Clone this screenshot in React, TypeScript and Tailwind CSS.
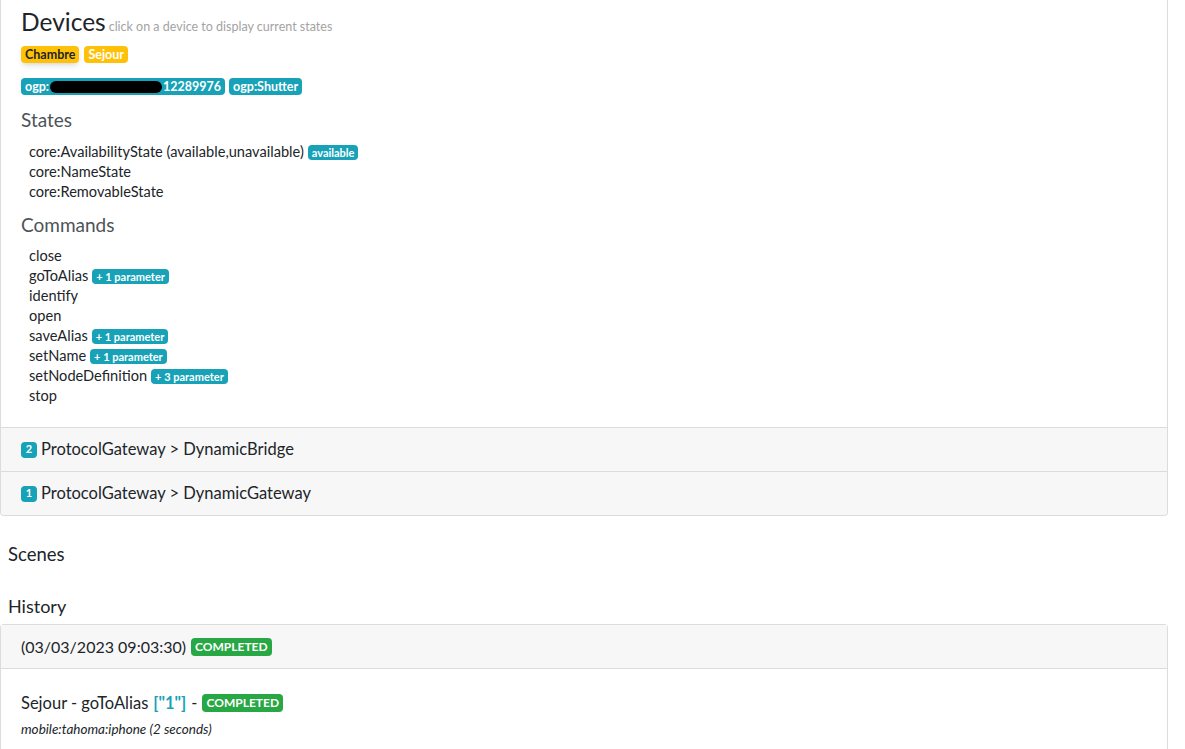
import React from "react";

const font = { fontFamily: "Lato, 'Noto Sans', sans-serif" };

function Badge({ children, className = "" }: { children: React.ReactNode; className?: string }) {
  return (
    <span className={`inline-block rounded px-1 text-[11px] font-bold leading-[15px] text-white ${className}`}>
      {children}
    </span>
  );
}

const states = [
  { name: "core:AvailabilityState (available,unavailable)", value: "available" },
  { name: "core:NameState" },
  { name: "core:RemovableState" },
];

const commands = [
  { name: "close" },
  { name: "goToAlias", params: 1 },
  { name: "identify" },
  { name: "open" },
  { name: "saveAlias", params: 1 },
  { name: "setName", params: 1 },
  { name: "setNodeDefinition", params: 3 },
  { name: "stop" },
];

export default function App() {
  return (
    <div className="min-h-screen bg-white text-[#212529]" style={font}>
      <div className="w-[1168px]">
        <div className="rounded-b border-x border-b border-[#dcdcdc]">
          <div className="px-5 pb-[21px] pt-[6px]">
            <div className="flex items-baseline gap-[3px]">
              <h1 className="text-[24.5px] leading-[32px]">Devices</h1>
              <span className="text-[12.5px] text-[#a3a3a3]">click on a device to display current states</span>
            </div>
            <div className="mt-[8px] flex gap-[5px]">
              <span className="rounded bg-[#ffc107] px-1 text-[12.5px] font-bold leading-[17px] text-[#212529] shadow-md">Chambre</span>
              <span className="rounded bg-[#ffc107] px-1 text-[12.5px] font-bold leading-[17px] text-white">Sejour</span>
            </div>
            <div className="mt-[15px] flex gap-[4px]">
              <span className="inline-flex items-center rounded bg-[#17a2b8] px-1 text-[12.5px] font-bold leading-[17px] text-white">
                ogp:
                <span className="mx-[1px] inline-block h-[12px] w-[112px] rounded-full bg-black" />
                12289976
              </span>
              <span className="rounded bg-[#17a2b8] px-1 text-[12.5px] font-bold leading-[17px] text-white">ogp:Shutter</span>
            </div>

            <h2 className="mt-[13px] text-[19px] leading-[24px] text-[#4d5358]">States</h2>
            <ul className="mt-[10px] pl-2 text-[14.6px] leading-[20px]">
              {states.map((s) => (
                <li key={s.name} className="flex items-center gap-1">
                  <span>{s.name}</span>
                  {s.value && <Badge className="bg-[#17a2b8]">{s.value}</Badge>}
                </li>
              ))}
            </ul>

            <h2 className="mt-[11px] text-[19px] leading-[24px] text-[#4d5358]">Commands</h2>
            <ul className="mt-[9px] pl-2 text-[14.6px] leading-[20px]">
              {commands.map((c) => (
                <li key={c.name} className="flex items-center gap-1">
                  <span>{c.name}</span>
                  {c.params && <Badge className="bg-[#17a2b8]">+ {c.params} parameter</Badge>}
                </li>
              ))}
            </ul>
          </div>
          {[
            { n: 2, label: "ProtocolGateway > DynamicBridge" },
            { n: 1, label: "ProtocolGateway > DynamicGateway" },
          ].map((g, i) => (
            <div
              key={g.label}
              className={`flex h-[44px] items-center gap-[4px] border-t border-[#dcdcdc] bg-[#f7f7f7] px-5 text-[16.5px] ${i === 1 ? "rounded-b" : ""}`}
            >
              <span className="inline-flex h-[16px] w-[16px] items-center justify-center rounded bg-[#17a2b8] text-[11px] font-bold text-white">
                {g.n}
              </span>
              <span>{g.label}</span>
            </div>
          ))}
        </div>

        <h3 className="mt-[26px] px-2 text-[18.5px] leading-[24px]">Scenes</h3>
        <h3 className="mt-[28px] px-2 text-[18px] leading-[24px]">History</h3>

        <div className="mt-[6px] rounded-t border-x border-t border-[#dcdcdc]">
          <div className="flex h-[44px] items-center gap-[5px] border-b border-[#dcdcdc] bg-[#f7f7f7] px-5 text-[16px]">
            <span>(03/03/2023 09:03:30)</span>
            <span className="rounded bg-[#28a745] px-1 text-[12px] font-bold leading-[18px] text-white">COMPLETED</span>
          </div>
          <div className="px-5 pb-5 pt-[22px]">
            <div className="flex items-center gap-[5px] text-[16.5px]">
              <span>Sejour - goToAlias</span>
              <span className="font-bold text-[#17a2b8]">["1"]</span>
              <span>-</span>
              <span className="rounded bg-[#28a745] px-1 text-[12px] font-bold leading-[18px] text-white">COMPLETED</span>
            </div>
            <div className="mt-[3px] text-[13.5px] italic leading-[20px]">mobile:tahoma:iphone (2 seconds)</div>
          </div>
        </div>
      </div>
    </div>
  );
}
